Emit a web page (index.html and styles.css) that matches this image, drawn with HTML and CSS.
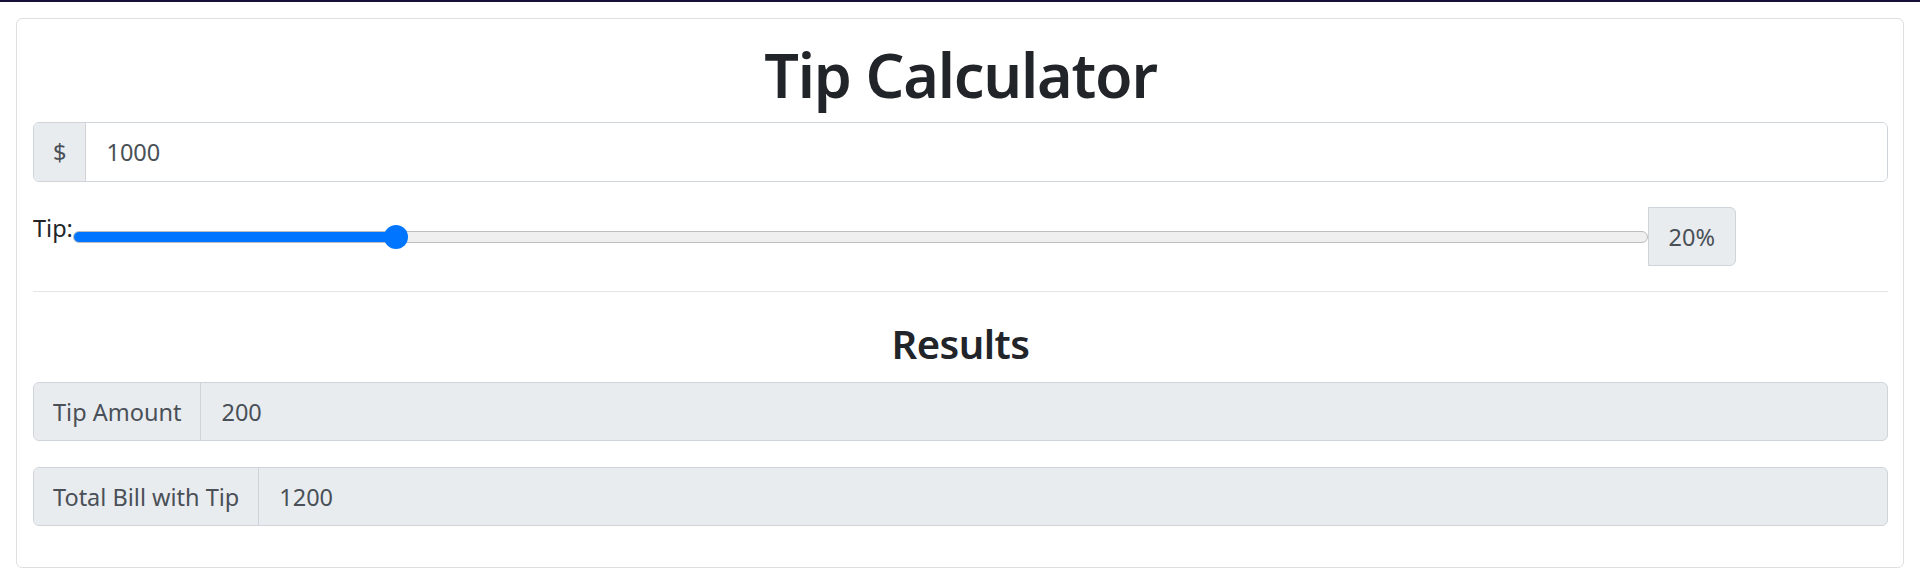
FILE: index.html
```html
<!DOCTYPE html>
<html lang="en">
<head>
<meta charset="utf-8">
<title>Tip Calculator</title>
<link rel="stylesheet" href="styles.css">
</head>
<body>
<div class="topbar"></div>
<main class="page">
  <section class="card">
    <h1 class="title">Tip Calculator</h1>
    <div class="input-group bill">
      <span class="addon">$</span>
      <input class="field" type="text" value="1000">
    </div>
    <div class="tip-row">
      <label class="tip-label" for="tip">Tip:</label>
      <input id="tip" class="slider" type="range" min="0" max="100" value="20" style="--fill: 0.2">
      <span class="pct">20%</span>
    </div>
    <hr class="divider">
    <h3 class="results-title">Results</h3>
    <div class="input-group readonly">
      <span class="addon">Tip Amount</span>
      <span class="value">200</span>
    </div>
    <div class="input-group readonly last">
      <span class="addon">Total Bill with Tip</span>
      <span class="value">1200</span>
    </div>
  </section>
</main>
</body>
</html>
```

FILE: styles.css
```css
* { box-sizing: border-box; }

html, body {
  margin: 0;
  padding: 0;
  background: #ffffff;
}

body {
  font-family: "Noto Sans", "Open Sans", sans-serif;
  font-size: 23.5px;
  color: #212529;
}

.topbar {
  height: 2px;
  background: #160f38;
}

.page {
  padding: 16px 16px 0;
}

.card {
  border: 1px solid #dfdfdf;
  border-radius: 6px;
  padding: 16px 15px 16px 16px;
  display: flex;
  flex-direction: column;
}

.title {
  margin: 0 0 7px;
  font-size: 61px;
  line-height: 80px;
  font-weight: 600;
  letter-spacing: -1.2px;
  text-align: center;
  color: #212529;
}

.input-group {
  display: flex;
  align-items: stretch;
  height: 59px;
  border: 1px solid #ced4da;
  border-radius: 6px;
  overflow: hidden;
  margin-bottom: 26px;
  color: #495057;
}

.input-group.bill {
  height: 60px;
  margin-bottom: 25px;
}

.input-group.last {
  margin-bottom: 25px;
}

.addon {
  display: flex;
  align-items: center;
  padding: 0 19px;
  background: #e9ecef;
  border-right: 1px solid #ced4da;
  color: #495057;
  white-space: nowrap;
}

.field {
  flex: 1;
  border: 0;
  outline: none;
  margin: 0;
  padding: 0 20px;
  font: inherit;
  color: #495057;
  background: #ffffff;
}

.readonly {
  background: #e9ecef;
}

.value {
  display: flex;
  align-items: center;
  padding: 0 20px;
  flex: 1;
}

.tip-row {
  display: flex;
  align-items: center;
  height: 59px;
  margin-bottom: 25px;
}

.tip-label {
  align-self: flex-start;
  line-height: 42px;
  color: #212529;
}

.slider {
  -webkit-appearance: none;
  appearance: none;
  flex: 1;
  height: 24px;
  margin: 0;
  background: transparent;
}

.slider::-webkit-slider-runnable-track {
  height: 12px;
  box-sizing: border-box;
  border: 1px solid #bdbdbd;
  border-radius: 6px;
  background: linear-gradient(to right, #0075ff calc(11px + (100% - 22px) * var(--fill)), #efefef 0);
}

.slider::-webkit-slider-thumb {
  -webkit-appearance: none;
  appearance: none;
  width: 24px;
  height: 24px;
  margin-top: -7px;
  border: 0;
  border-radius: 50%;
  background: #0075ff;
}

.pct {
  display: flex;
  align-items: center;
  height: 59px;
  padding: 0 20px;
  margin-right: 152px;
  background: #e9ecef;
  border: 1px solid #ced4da;
  border-radius: 0 6px 6px 0;
  color: #495057;
}

.divider {
  margin: 0;
  border: 0;
  border-top: 1px solid #e5e5e5;
  height: 0;
}

.results-title {
  margin: 28px 0 14px;
  font-size: 40px;
  line-height: 48px;
  font-weight: 600;
  letter-spacing: -0.5px;
  text-align: center;
  color: #212529;
}
```
